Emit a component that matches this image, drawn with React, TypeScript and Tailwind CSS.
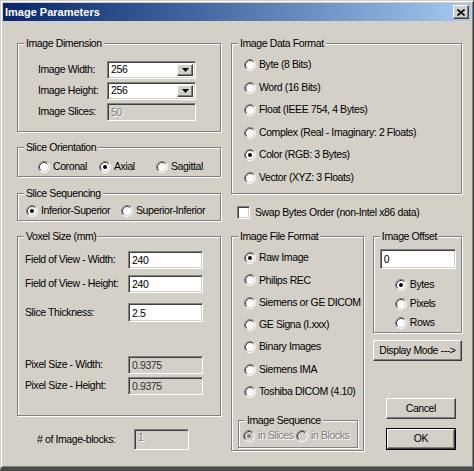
import type { ReactNode } from 'react';

const sunken =
  'border border-t-[#808080] border-l-[#808080] border-b-white border-r-white shadow-[inset_1px_1px_0_#404040,inset_-1px_-1px_0_#d4d0c8]';
const raised =
  'border border-t-white border-l-white border-b-[#404040] border-r-[#404040] shadow-[inset_-1px_-1px_0_#808080,inset_1px_1px_0_#d4d0c8] bg-[#d4d0c8]';
const dis = 'text-[#808080] [text-shadow:1px_1px_0_#fff]';

function Group({ title, className = '', children }: { title: string; className?: string; children?: ReactNode }) {
  return (
    <div className={`relative border border-[#808080] shadow-[inset_1px_1px_0_#fff,1px_1px_0_#fff] ${className}`}>
      <span className="absolute -top-[8px] left-[6px] px-[2px] bg-[#d4d0c8] leading-[14px] whitespace-nowrap">
        {title}
      </span>
      {children}
    </div>
  );
}

function RadioMark({ checked = false, disabled = false }: { checked?: boolean; disabled?: boolean }) {
  return (
    <svg width="12" height="12" viewBox="0 0 12 12" className="shrink-0">
      <circle cx="6" cy="6" r="5" fill={disabled ? '#d4d0c8' : '#fff'} />
      <path d="M2.11 9.89A5.5 5.5 0 0 1 9.89 2.11" fill="none" stroke="#808080" />
      <path d="M9.89 2.11A5.5 5.5 0 0 1 2.11 9.89" fill="none" stroke="#fff" />
      <path d="M2.82 9.18A4.5 4.5 0 0 1 9.18 2.82" fill="none" stroke="#404040" />
      <path d="M9.18 2.82A4.5 4.5 0 0 1 2.82 9.18" fill="none" stroke="#d4d0c8" />
      {checked && <circle cx="6" cy="6" r="2" fill={disabled ? '#808080' : '#000'} />}
    </svg>
  );
}

function Radio({ label, checked, disabled, className = '' }: { label: string; checked?: boolean; disabled?: boolean; className?: string }) {
  return (
    <label className={`flex items-center gap-[3px] whitespace-nowrap ${className}`}>
      <RadioMark checked={checked} disabled={disabled} />
      <span className={disabled ? dis : ''}>{label}</span>
    </label>
  );
}

function Field({ value, disabled, className = '' }: { value: string; disabled?: boolean; className?: string }) {
  return (
    <input
      defaultValue={value}
      disabled={disabled}
      className={`${sunken} ${disabled ? `bg-[#d4d0c8] ${dis}` : 'bg-white'} px-[3px] outline-none ${className}`}
    />
  );
}

function Combo({ value }: { value: string }) {
  return (
    <div className={`${sunken} bg-white flex items-center w-[89px] h-[18px] p-[2px]`}>
      <span className="flex-1 pl-[1px]">{value}</span>
      <button className={`${raised} w-[16px] h-full flex items-center justify-center`}>
        <svg width="7" height="4" viewBox="0 0 7 4">
          <path d="M0 0h7L3.5 4z" fill="#000" />
        </svg>
      </button>
    </div>
  );
}

function Row({ label, labelW, children, className = '' }: { label: string; labelW: string; children: ReactNode; className?: string }) {
  return (
    <div className={`flex items-center ${className}`}>
      <span className={`${labelW} whitespace-nowrap`}>{label}</span>
      {children}
    </div>
  );
}

export default function App() {
  return (
    <div className="w-[474px] h-[471px] bg-[#d4d0c8] text-black text-[10.5px] tracking-[-0.4px] font-['Liberation_Sans',Arial,sans-serif] border border-b-[4px] border-t-[#d4d0c8] border-l-[#d4d0c8] border-r-[#404040] border-b-[#4a4a4a] shadow-[inset_1px_1px_0_#fff,inset_-1px_-1px_0_#808080] p-[2px] flex flex-col select-none">
      {/* title bar */}
      <div className="h-[18px] shrink-0 flex items-center pl-[2px] pr-[2px] bg-gradient-to-r from-[#0a246a] to-[#a6caf0]">
        <span className="flex-1 text-white font-bold text-[11px] tracking-normal">Image Parameters</span>
        <button className={`${raised} w-[16px] h-[14px] flex items-center justify-center`}>
          <svg width="8" height="7" viewBox="0 0 8 7">
            <path d="M0.5 0.5l7 6M7.5 0.5l-7 6" stroke="#000" strokeWidth="1.6" />
          </svg>
        </button>
      </div>

      <div className="flex gap-[10px] pl-[14px] pt-[22px]">
        {/* left column */}
        <div className="w-[204px] flex flex-col">
          <Group title="Image Dimension" className="h-[89px] pt-[17px] pl-[20px] flex flex-col gap-[3px]">
            <Row label="Image Width:" labelW="w-[69px]">
              <Combo value="256" />
            </Row>
            <Row label="Image Height:" labelW="w-[69px]">
              <Combo value="256" />
            </Row>
            <Row label="Image Slices:" labelW="w-[69px]">
              <Field value="50" disabled className="w-[89px] h-[18px]" />
            </Row>
          </Group>

          <Group title="Slice Orientation" className="mt-[15px] h-[30px] pt-[11px] pl-[20px] flex items-start">
            <Radio label="Coronal" className="w-[61px]" />
            <Radio label="Axial" checked className="w-[57px]" />
            <Radio label="Sagittal" />
          </Group>

          <Group title="Slice Sequencing" className="mt-[16px] h-[28px] pt-[9px] pl-[8px] flex items-start">
            <Radio label="Inferior-Superior" checked className="w-[95px]" />
            <Radio label="Superior-Inferior" />
          </Group>

          <Group title="Voxel Size (mm)" className="mt-[15px] h-[180px] pt-[14px] pl-[7px] flex flex-col">
            <Row label="Field of View - Width:" labelW="w-[103px]">
              <Field value="240" className="w-[75px] h-[18px]" />
            </Row>
            <Row label="Field of View - Height:" labelW="w-[103px]" className="mt-[6px]">
              <Field value="240" className="w-[75px] h-[18px]" />
            </Row>
            <Row label="Slice Thickness:" labelW="w-[103px]" className="mt-[10px]">
              <Field value="2.5" className="w-[75px] h-[19px]" />
            </Row>
            <Row label="Pixel Size - Width:" labelW="w-[103px]" className="mt-[34px]">
              <Field value="0.9375" disabled className="w-[75px] h-[18px] !text-[#303030] ![text-shadow:none]" />
            </Row>
            <Row label="Pixel Size - Height:" labelW="w-[103px]" className="mt-[3px]">
              <Field value="0.9375" disabled className="w-[75px] h-[18px] !text-[#303030] ![text-shadow:none]" />
            </Row>
          </Group>

          <Row label="# of Image-blocks:" labelW="w-[97px]" className="mt-[13px] pl-[20px]">
            <Field value="1" disabled className="w-[55px] h-[21px] pb-[5px]" />
          </Row>
        </div>

        {/* right column */}
        <div className="w-[231px] flex flex-col">
          <Group title="Image Data Format" className="h-[151px] pt-[10px] pl-[12px] flex flex-col">
            {[
              ['Byte (8 Bits)', false],
              ['Word (16 Bits)', false],
              ['Float (IEEE 754, 4 Bytes)', false],
              ['Complex (Real - Imaginary: 2 Floats)', false],
              ['Color (RGB: 3 Bytes)', true],
              ['Vector (XYZ: 3 Floats)', false],
            ].map(([label, checked]) => (
              <Radio key={label as string} label={label as string} checked={checked as boolean} className="h-[22.5px]" />
            ))}
          </Group>

          <label className="mt-[12px] ml-[6px] flex items-center gap-[5px] h-[13px] whitespace-nowrap">
            <span className={`w-[13px] h-[13px] bg-white ${sunken}`} />
            Swap Bytes Order (non-Intel x86 data)
          </label>

          <div className="mt-[17px] flex gap-[9px]">
            <Group title="Image File Format" className="w-[134px] h-[215px] pt-[10px] pl-[12px] flex flex-col">
              {[
                ['Raw Image', true],
                ['Philips REC', false],
                ['Siemens or GE DICOM', false],
                ['GE Signa (I.xxx)', false],
                ['Binary Images', false],
                ['Siemens IMA', false],
                ['Toshiba DICOM (4.10)', false],
              ].map(([label, checked]) => (
                <Radio key={label as string} label={label as string} checked={checked as boolean} className="h-[22.3px]" />
              ))}
              <Group title="Image Sequence" className="mt-[17px] -ml-[6px] w-[120px] h-[28px] pt-[7px] pl-[4px] flex items-start">
                <Radio label="in Slices" checked disabled className="w-[53px]" />
                <Radio label="in Blocks" disabled />
              </Group>
            </Group>

            <div className="w-[90px] flex flex-col">
              <Group title="Image Offset" className="h-[97px] pt-[12px] pl-[6px] flex flex-col">
                <Field value="0" className="w-[76px] h-[20px]" />
                <div className="mt-[6px] pl-[15px] flex flex-col">
                  <Radio label="Bytes" checked className="h-[19px]" />
                  <Radio label="Pixels" className="h-[19px]" />
                  <Radio label="Rows" className="h-[19px]" />
                </div>
              </Group>
              <button className={`${raised} mt-[7px] h-[21px] w-full whitespace-nowrap`}>Display Mode ---&gt;</button>
              <button className={`${raised} mt-[37px] ml-[13px] h-[21px] w-[70px]`}>Cancel</button>
              <button className="mt-[9px] ml-[13px] h-[22px] w-[70px] border border-black p-0">
                <span className={`${raised} flex items-center justify-center w-full h-full`}>OK</span>
              </button>
            </div>
          </div>
        </div>
      </div>
    </div>
  );
}
